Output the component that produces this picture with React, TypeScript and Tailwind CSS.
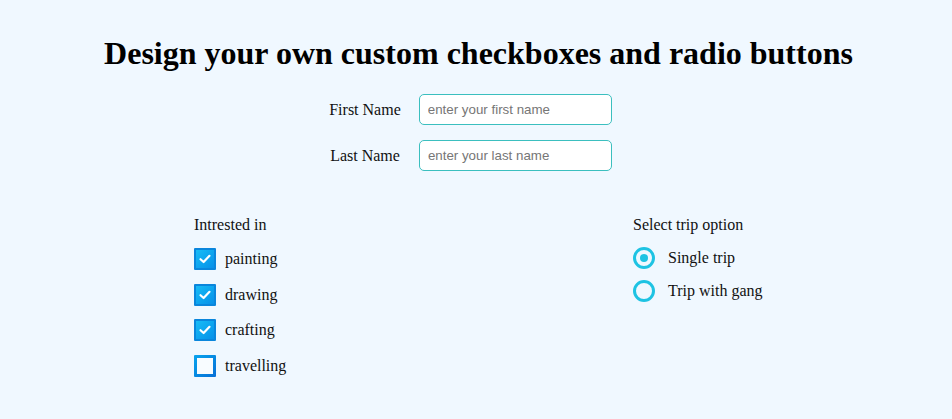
import React from "react";

const serif = { fontFamily: '"Liberation Serif", "Times New Roman", serif' };

function Check({ checked }: { checked: boolean }) {
  if (checked) {
    return (
      <span className="flex h-[22px] w-[22px] items-center justify-center rounded-[1px] border-2 border-[#0a86dc] bg-gradient-to-br from-[#18bcf6] to-[#0890e8]">
        <svg width="14" height="14" viewBox="0 0 14 14" fill="none">
          <path d="M2.5 7.2 L5.6 10 L11.5 3.8" stroke="white" strokeWidth="2.2" strokeLinecap="round" strokeLinejoin="round" />
        </svg>
      </span>
    );
  }
  return (
    <span className="flex h-[22px] w-[22px] items-center justify-center rounded-[1px] bg-gradient-to-br from-[#0aa4ee] to-[#0a6fd6] p-[3px]">
      <span className="h-full w-full bg-[#f8fcff]" />
    </span>
  );
}

function Radio({ checked }: { checked: boolean }) {
  return (
    <span className="flex h-[22px] w-[22px] items-center justify-center rounded-full border-[3px] border-[#1ec3e3]">
      {checked && <span className="h-[8px] w-[8px] rounded-full bg-[#1ec3e3]" />}
    </span>
  );
}

export default function App() {
  const interests: [string, boolean][] = [
    ["painting", true],
    ["drawing", true],
    ["crafting", true],
    ["travelling", false],
  ];
  return (
    <div className="min-h-[419px] w-full bg-[#f0f8ff] text-[#111]" style={serif}>
      <h1 className="pl-[5px] pt-[35px] text-center text-[32px] font-bold leading-[37px] text-black">
        Design your own custom checkboxes and radio buttons
      </h1>
      <div className="mt-[22px] flex flex-col items-center gap-[15px] pr-[12px]">
        <div className="flex items-center gap-[18px]">
          <span className="pl-[1px] text-[16px]">First Name</span>
          <input
            className="h-[31px] w-[193px] rounded-[5px] border border-[#3bbfbf] bg-white px-[8px] text-[13.33px] outline-none placeholder:text-[#767676]"
            style={{ fontFamily: '"Liberation Sans", Arial, sans-serif' }}
            placeholder="enter your first name"
          />
        </div>
        <div className="ml-[2px] flex items-center gap-[19px]">
          <span className="text-[16px]">Last Name</span>
          <input
            className="h-[31px] w-[193px] rounded-[5px] border border-[#3bbfbf] bg-white px-[8px] text-[13.33px] outline-none placeholder:text-[#767676]"
            style={{ fontFamily: '"Liberation Sans", Arial, sans-serif' }}
            placeholder="enter your last name"
          />
        </div>
      </div>
      <div className="mt-[45px] flex pl-[194px]">
        <div className="w-[439px]">
          <div className="text-[16px] leading-[18px]">Intrested in</div>
          <div className="mt-[7px] flex flex-col">
            {interests.map(([label, c]) => (
              <div key={label} className="flex h-[35.7px] items-center gap-[9px]">
                <Check checked={c} />
                <span className="text-[16px]">{label}</span>
              </div>
            ))}
          </div>
        </div>
        <div>
          <div className="text-[16px] leading-[18px]">Select trip option</div>
          <div className="mt-[7px] flex flex-col">
            {["Single trip", "Trip with gang"].map((l, i) => (
              <div key={l} className="flex h-[33px] items-center gap-[13px]">
                <Radio checked={i === 0} />
                <span className="text-[16px]">{l}</span>
              </div>
            ))}
          </div>
        </div>
      </div>
    </div>
  );
}
